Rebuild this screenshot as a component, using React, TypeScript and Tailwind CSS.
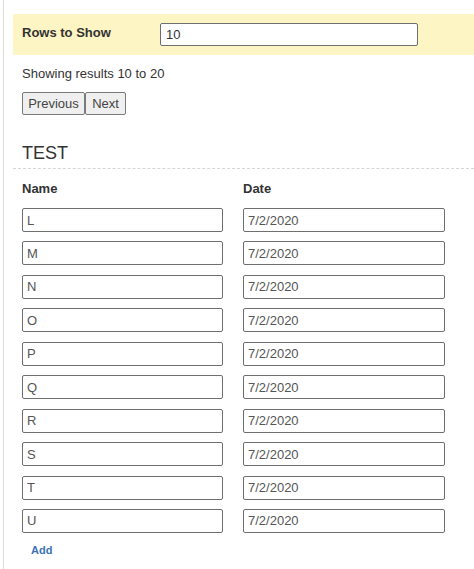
import React from 'react';

const rows = ['L', 'M', 'N', 'O', 'P', 'Q', 'R', 'S', 'T', 'U'];

export default function App() {
  return (
    <div className="min-h-[569px] bg-white font-['Liberation_Sans',Arial,sans-serif] text-[13px] text-[#333]">
      <div className="ml-[3px] min-h-[569px] border-l border-[#dcdcdc] pl-[9px] pt-[14px]">
        {/* Rows to show */}
        <div className="flex h-[41px] items-start bg-[#fdf5c4] pl-[9px] pt-[9px]">
          <span className="w-[138px] pt-[2px] font-bold leading-[15px] text-[#333]">Rows to Show</span>
          <input
            type="text"
            defaultValue="10"
            className="h-[23px] w-[258px] rounded-[2px] border border-[#6f6f6f] bg-white px-[5px] text-[13px] text-[#333] outline-none"
          />
        </div>

        <div className="pl-[9px]">
          <p className="mt-[11px] leading-[15px]">Showing results 10 to 20</p>

          <div className="mt-[11px] flex">
            <button className="h-[23px] w-[63px] rounded-[2px] border border-[#7a7a7a] bg-[#efefef] text-[13px] text-[#444]">
              Previous
            </button>
            <button className="h-[23px] w-[41px] rounded-[2px] border border-[#7a7a7a] bg-[#efefef] text-[13px] text-[#444]">
              Next
            </button>
          </div>

          <h2 className="mt-[27px] text-[18px] leading-[22px] text-[#333]">TEST</h2>
        </div>

        <div className="mt-[4px] border-t border-dashed border-[#d6d6d6]" />

        <div className="pl-[9px]">
          <div className="mt-[12px] grid grid-cols-[201px_202px] gap-x-[20px] font-bold leading-[15px]">
            <span>Name</span>
            <span>Date</span>
          </div>

          <div className="mt-[12px] flex flex-col gap-y-[9.45px]">
            {rows.map((r) => (
              <div key={r} className="grid grid-cols-[201px_202px] gap-x-[20px]">
                <input
                  type="text"
                  defaultValue={r}
                  className="h-[24px] rounded-[2px] border border-[#6f6f6f] bg-white px-[4px] text-[13px] text-[#555] outline-none"
                />
                <input
                  type="text"
                  defaultValue="7/2/2020"
                  className="h-[24px] rounded-[2px] border border-[#6f6f6f] bg-white px-[4px] text-[13px] text-[#555] outline-none"
                />
              </div>
            ))}
          </div>

          <a className="ml-[9px] mt-[9px] inline-block text-[11px] font-bold text-[#3b72b9]">Add</a>
        </div>
      </div>
    </div>
  );
}
